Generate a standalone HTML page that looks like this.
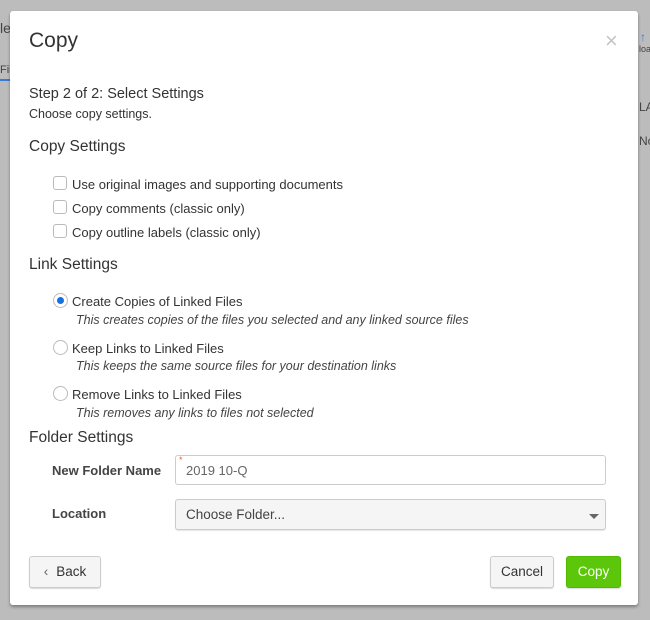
<!DOCTYPE html>
<html><head><style>
body{margin:0;width:650px;height:620px;background:#bcbcbc;font-family:"Liberation Sans",sans-serif;color:#333;position:relative;overflow:hidden}
.m{position:absolute;left:10px;top:11px;width:628px;height:594px;background:#fff;border-radius:3px;box-shadow:0 2px 3px rgba(0,0,0,.35)}
.a{position:absolute;white-space:nowrap}
.cb{position:absolute;width:12px;height:12px;border:1px solid #bbb;border-radius:3px;background:#fff}
.rd{position:absolute;width:13px;height:13px;border:1px solid #bbb;border-radius:50%;background:#fff}
.t{font-size:13px;color:#333}
.i{font-size:12.5px;font-style:italic;color:#444}
.h{font-size:15.5px;color:#333}
.btn{position:absolute;height:30px;border:1px solid #ccc;border-radius:3px;background:#f5f5f5;font-size:13.5px;line-height:30px;text-align:center;box-shadow:0 1px 1px rgba(0,0,0,.15)}
</style></head><body>
<div class="a" style="left:0;top:20px;font-size:14px;color:#444">le</div>
<div class="a" style="left:0;top:64px;font-size:11px;color:#444">Fil</div>
<div style="position:absolute;left:0;top:79px;width:10px;height:2px;background:#3a7bd5"></div>
<div class="m">
<div class="a" style="left:19px;top:18px;font-size:21px;color:#333">Copy</div>
<div class="a" style="left:595px;top:17px;font-size:22px;color:#c4c4c4">×</div>
<div class="a h" style="left:19px;top:75px;font-size:14.5px">Step 2 of 2: Select Settings</div>
<div class="a t" style="left:19px;top:96px;font-size:12.5px">Choose copy settings.</div>
<div class="a h" style="left:19px;top:127px">Copy Settings</div>
<div class="cb" style="left:43px;top:165px"></div><div class="a t" style="left:62px;top:166px">Use original images and supporting documents</div>
<div class="cb" style="left:43px;top:189px"></div><div class="a t" style="left:62px;top:190px">Copy comments (classic only)</div>
<div class="cb" style="left:43px;top:213px"></div><div class="a t" style="left:62px;top:214px">Copy outline labels (classic only)</div>
<div class="a h" style="left:19px;top:245px">Link Settings</div>
<div class="rd" style="left:43px;top:282px"><div style="position:absolute;left:3px;top:3px;width:7px;height:7px;border-radius:50%;background:#1a6fe0"></div></div>
<div class="a t" style="left:62px;top:283px">Create Copies of Linked Files</div>
<div class="a i" style="left:66px;top:302px">This creates copies of the files you selected and any linked source files</div>
<div class="rd" style="left:43px;top:329px"></div>
<div class="a t" style="left:62px;top:330px">Keep Links to Linked Files</div>
<div class="a i" style="left:66px;top:348px">This keeps the same source files for your destination links</div>
<div class="rd" style="left:43px;top:375px"></div>
<div class="a t" style="left:62px;top:376px">Remove Links to Linked Files</div>
<div class="a i" style="left:66px;top:395px">This removes any links to files not selected</div>
<div class="a h" style="left:19px;top:418px">Folder Settings</div>
<div class="a" style="left:42px;top:452px;font-size:13px;font-weight:bold;color:#444">New Folder Name</div>
<div style="position:absolute;left:165px;top:444px;width:429px;height:28px;border:1px solid #ccc;border-radius:3px;background:#fff"></div>
<div class="a" style="left:169px;top:444px;font-size:9px;color:#e8612c">*</div>
<div class="a" style="left:176px;top:452px;font-size:13px;color:#666">2019 10-Q</div>
<div class="a" style="left:42px;top:495px;font-size:13px;font-weight:bold;color:#444">Location</div>
<div style="position:absolute;left:165px;top:488px;width:429px;height:29px;border:1px solid #ccc;border-radius:3px;background:#f5f5f5;box-shadow:0 1px 1px rgba(0,0,0,.1)"></div>
<div class="a" style="left:176px;top:496px;font-size:13.5px;color:#444">Choose Folder...</div>
<div style="position:absolute;left:579px;top:503px;width:0;height:0;border-left:5px solid transparent;border-right:5px solid transparent;border-top:5px solid #666"></div>
<div class="btn" style="left:19px;top:545px;width:70px"><span style="color:#666;margin-right:8px">&lsaquo;</span>Back</div>
<div class="btn" style="left:480px;top:545px;width:62px">Cancel</div>
<div class="btn" style="left:556px;top:545px;width:53px;background:#5cc70a;border-color:#52b800;color:#fff">Copy</div>
</div>
<div class="a" style="left:640px;top:30px;color:#3a7bd5;font-size:12px">↑</div>
<div class="a" style="left:639px;top:44px;font-size:9px;color:#444">loa</div>
<div class="a" style="left:639px;top:100px;font-size:12px;color:#444">LA</div>
<div class="a" style="left:639px;top:134px;font-size:12px;color:#444">No</div>
</body></html>
